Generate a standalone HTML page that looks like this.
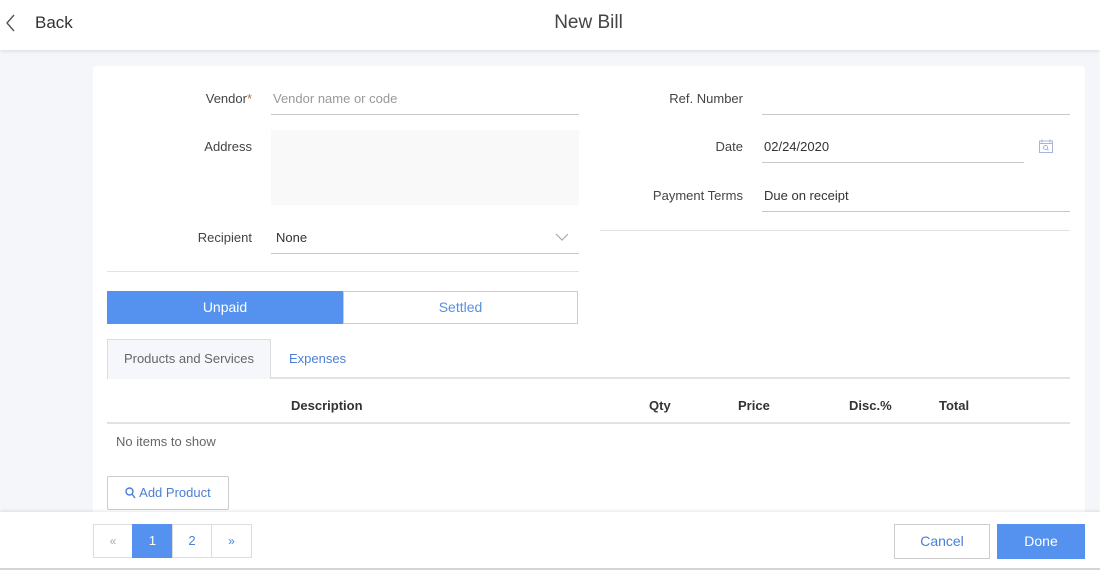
<!DOCTYPE html>
<html><head><meta charset="utf-8"><style>
*{box-sizing:border-box;margin:0;padding:0}
body{width:1100px;height:570px;overflow:hidden;background:#f4f6f9;font-family:"Liberation Sans",sans-serif;font-size:13px;color:#444;position:relative}
.a{position:absolute}
.hdr{left:0;top:0;width:1100px;height:50px;background:#fff;box-shadow:0 1px 4px rgba(0,0,0,.12)}
.card{left:93px;top:66px;width:992px;height:460px;background:#fff;border-radius:3px}
.lbl{text-align:right;width:120px;color:#444}
.line{height:1px;background:#c8c8c8}
.hl{height:1px;background:#e2e2e2}
.foot{left:0;top:512px;width:1100px;height:56px;background:#fff;box-shadow:0 -1px 3px rgba(0,0,0,.1)}
.pg{top:524px;height:34px;border:1px solid #ddd;text-align:center;line-height:32px;color:#4a7fd6;background:#fff}
th{font-weight:bold}
</style></head><body>
<div class="a hdr">
<svg class="a" style="left:6px;top:14px" width="10" height="18" viewBox="0 0 10 18"><path d="M8 1L1 9l7 8" fill="none" stroke="#555" stroke-width="1.4"/></svg>
<div class="a" style="left:35px;top:13px;font-size:17px;color:#333">Back</div>
<div class="a" style="left:0;width:1177px;top:12px;font-size:19px;color:#444;text-align:center">New Bill</div>
</div>
<div class="a card"></div>
<div class="a lbl" style="left:132px;top:91px">Vendor<span style="color:#c0742a">*</span></div>
<div class="a" style="left:273px;top:91px;color:#999">Vendor name or code</div>
<div class="a line" style="left:271px;top:114px;width:308px"></div>
<div class="a lbl" style="left:132px;top:139px">Address</div>
<div class="a" style="left:271px;top:130px;width:308px;height:75px;background:#f9f9f9"></div>
<div class="a lbl" style="left:132px;top:230px">Recipient</div>
<div class="a" style="left:276px;top:230px;color:#333">None</div>
<svg class="a" style="left:555px;top:233px" width="14" height="9" viewBox="0 0 14 9"><path d="M1 1l6 6 6-6" fill="none" stroke="#aaa" stroke-width="1.2"/></svg>
<div class="a line" style="left:271px;top:253px;width:308px"></div>
<div class="a hl" style="left:107px;top:271px;width:472px"></div>

<div class="a lbl" style="left:623px;top:91px">Ref. Number</div>
<div class="a line" style="left:762px;top:114px;width:308px"></div>
<div class="a lbl" style="left:623px;top:139px">Date</div>
<div class="a" style="left:764px;top:139px;color:#333">02/24/2020</div>
<div class="a line" style="left:762px;top:162px;width:262px"></div>
<svg class="a" style="left:1038px;top:138px" width="16" height="16" viewBox="0 0 16 16"><rect x="1.5" y="3" width="13" height="11.5" fill="none" stroke="#a8b4e0"/><path d="M1.5 5.5h13M4 1.5v3M12 1.5v3" stroke="#a8b4e0"/><circle cx="7.5" cy="9.5" r="2" fill="none" stroke="#a8b4e0"/><path d="M9 11l1.5 1.5" stroke="#a8b4e0"/></svg>
<div class="a lbl" style="left:623px;top:188px">Payment Terms</div>
<div class="a" style="left:764px;top:188px;color:#333">Due on receipt</div>
<div class="a line" style="left:762px;top:211px;width:308px"></div>
<div class="a hl" style="left:600px;top:230px;width:470px"></div>

<div class="a" style="left:107px;top:291px;width:236px;height:33px;background:#5592f0;color:#fff;text-align:center;line-height:33px;font-size:14px">Unpaid</div>
<div class="a" style="left:343px;top:291px;width:235px;height:33px;border:1px solid #ccc;color:#5a8fe0;text-align:center;line-height:31px;font-size:14px">Settled</div>

<div class="a" style="left:107px;top:339px;width:164px;height:40px;background:#f5f7fa;border:1px solid #ddd;border-bottom:none;color:#666;text-align:center;line-height:38px">Products and Services</div>
<div class="a" style="left:289px;top:351px;color:#4a7fd6">Expenses</div>
<div class="a" style="left:271px;top:377px;width:799px;height:2px;background:#e2e2e2"></div>

<div class="a" style="left:291px;top:398px;font-weight:bold;color:#333">Description</div>
<div class="a" style="left:649px;top:398px;font-weight:bold;color:#333">Qty</div>
<div class="a" style="left:738px;top:398px;font-weight:bold;color:#333">Price</div>
<div class="a" style="left:849px;top:398px;font-weight:bold;color:#333">Disc.%</div>
<div class="a" style="left:939px;top:398px;font-weight:bold;color:#333">Total</div>
<div class="a" style="left:107px;top:422px;width:963px;height:2px;background:#e2e2e2"></div>
<div class="a" style="left:116px;top:434px;color:#666">No items to show</div>

<div class="a" style="left:107px;top:476px;width:122px;height:34px;border:1px solid #ccc;border-radius:2px;color:#4a7fd6;line-height:32px;text-align:center">
<svg style="vertical-align:-2px" width="11" height="12" viewBox="0 0 11 12"><circle cx="4.5" cy="4.5" r="3.5" fill="none" stroke="#4a7fd6" stroke-width="1.4"/><path d="M7 7l3 4" stroke="#4a7fd6" stroke-width="1.4"/></svg> Add Product</div>

<div class="a foot"></div>
<div class="a pg" style="left:93px;width:40px;color:#aaa;font-size:12px">«</div>
<div class="a pg" style="left:132px;width:41px;background:#5592f0;border-color:#5592f0;color:#fff">1</div>
<div class="a pg" style="left:172px;width:40px">2</div>
<div class="a pg" style="left:211px;width:41px;font-size:12px">»</div>
<div class="a" style="left:894px;top:524px;width:96px;height:35px;border:1px solid #ccc;color:#4a7fd6;text-align:center;line-height:33px;font-size:14px">Cancel</div>
<div class="a" style="left:997px;top:524px;width:88px;height:35px;background:#5592f0;color:#fff;text-align:center;line-height:35px;font-size:14px">Done</div>
<div class="a" style="left:0;top:568px;width:1100px;height:2px;background:#d4d4d4"></div>
</body></html>
